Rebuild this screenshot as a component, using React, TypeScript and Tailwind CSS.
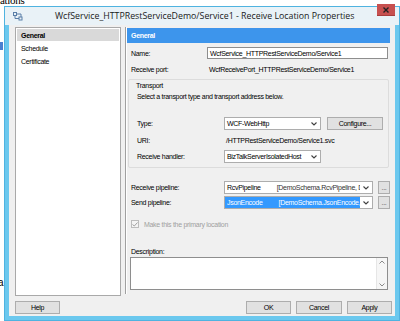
import React from 'react'

const font = { fontFamily: '"Liberation Sans", Arial, sans-serif' }

function Select({ w, value, extra, selected }: { w: string; value: string; extra?: string; selected?: boolean }) {
  return (
    <div className={`${w} shrink-0 h-[13px] bg-white border border-[#adadad] flex items-center`}>
      <div className={`flex-1 min-w-0 h-full flex items-center overflow-hidden whitespace-nowrap px-[2px] ${selected ? 'bg-[#3399ff] text-white' : 'text-black'}`}>
        <span>{value}</span>
        {extra && <span className={`ml-[16px] ${selected ? 'text-white' : 'text-[#333]'}`}>{extra}</span>}
      </div>
      <div className="w-[12px] shrink-0 h-full flex items-center justify-center">
        <svg width="6" height="4" viewBox="0 0 6 4"><path d="M0.5 0.5 L3 3 L5.5 0.5" stroke="#404040" strokeWidth="1.1" fill="none" /></svg>
      </div>
    </div>
  )
}

function Btn({ label, w }: { label: string; w: string }) {
  return (
    <div className={`${w} shrink-0 h-[13px] bg-[#e1e1e1] border border-[#adadad] flex items-center justify-center text-black`}>{label}</div>
  )
}

export default function App() {
  return (
    <div className="w-[400px] h-[321px] bg-white overflow-hidden flex text-[7px] tracking-[-0.3px] leading-none" style={font}>
      {/* background desktop fragments */}
      <div className="w-[4px] shrink-0 flex flex-col">
        <div className="h-[7px]" />
        <div className="mt-[35px] w-[3px] h-[8px] bg-[#4a7fd0]" />
        <div className="mt-[228px] text-[10px] text-black -ml-[2px]">a</div>
      </div>
      <div className="flex-1 min-w-0 flex flex-col">
        <div className="h-[6px] text-[11px] leading-none overflow-hidden -ml-[4px]">
          <div className="-mt-[5px] text-black" style={{ fontFamily: '"Liberation Serif", serif' }}>ations</div>
        </div>
        {/* window */}
        <div className="flex-1 min-h-0 min-w-0 bg-[#6bc8ee] border border-[#4fb3e0] flex flex-col px-[4px] pb-[4px]">
          <div className="h-[18px] shrink-0 -mx-[4px] bg-[#e9f2f7] flex items-center">
            <svg className="ml-[8px] shrink-0" width="10" height="9" viewBox="0 0 10 9">
              <rect x="0.5" y="0.5" width="3" height="3" fill="none" stroke="#5a7fa8" />
              <rect x="6" y="5" width="3" height="3" fill="none" stroke="#5a7fa8" />
              <path d="M2 4 L2 6.5 L6 6.5 M4 2 L8 2 L8 5" stroke="#5a7fa8" fill="none" />
            </svg>
            <div className="ml-[32px] text-[8.8px] tracking-normal text-[#1a1a1a] whitespace-nowrap" style={{ fontFamily: '"Open Sans", "Liberation Sans", sans-serif' }}>
              WcfService_HTTPRestServiceDemo/Service1 - Receive Location Properties
            </div>
            <div className="ml-auto mr-[4px] -mt-[3px] self-start shrink-0 w-[18px] h-[12px] bg-[#c7504f] border-b border-[#a83c3b] flex items-center justify-center">
              <svg width="6" height="6" viewBox="0 0 6 6"><path d="M0.5 0.5 L5.5 5.5 M5.5 0.5 L0.5 5.5" stroke="#222" strokeWidth="1.4" /></svg>
            </div>
          </div>
          <div className="flex-1 bg-[#f0f0f0] flex flex-col">
            <div className="flex pt-[2px]">
              {/* left list */}
              <div className="ml-[6px] w-[106px] shrink-0 h-[269px] bg-white border border-[#a9a9a9] flex flex-col pt-[1px]">
                <div className="mx-[1px] h-[12px] bg-[#d9d9d9] flex items-center pl-[4px] font-bold text-black">General</div>
                <div className="h-[14px] flex items-center pl-[5px] text-black">Schedule</div>
                <div className="h-[13px] flex items-center pl-[5px] text-black">Certificate</div>
              </div>
              {/* right panel */}
              <div className="ml-[4px] w-[266px] shrink-0 h-[267px] border-l border-[#a0a0a0] flex">
                <div className="w-[1px] bg-white" />
                <div className="flex-1 min-w-0 flex flex-col pt-[1px] pr-[1px] text-black">
                  <div className="h-[15px] bg-[#3d95ec] flex items-center pl-[4px] font-bold text-white">General</div>
                  <div className="mt-[4px] h-[12px] flex items-center">
                    <div className="w-[80px] shrink-0 pl-[4px]">Name:</div>
                    <div className="w-[181px] shrink-0 h-[12px] bg-white border border-[#8e8e8e] flex items-center px-[2px] whitespace-nowrap overflow-hidden">WcfService_HTTPRestServiceDemo/Service1</div>
                  </div>
                  <div className="mt-[4px] h-[12px] flex items-center whitespace-nowrap">
                    <div className="w-[82px] shrink-0 pl-[4px]">Receive port:</div>
                    <div>WcfReceivePort_HTTPRestServiceDemo/Service1</div>
                  </div>
                  {/* transport group */}
                  <div className="mt-[4px] mx-[1px] h-[89px] border border-[#dcdcdc] rounded-[2px] flex flex-col px-[8px]">
                    <div className="-ml-[1px] h-[10px] flex items-center">Transport</div>
                    <div className="mt-[1px] h-[10px] flex items-center whitespace-nowrap">Select a transport type and transport address below.</div>
                    <div className="mt-[16px] h-[13px] flex items-center">
                      <div className="w-[87px] shrink-0">Type:</div>
                      <Select w="w-[97px]" value="WCF-WebHttp" />
                      <div className="ml-[6px]"><Btn label="Configure..." w="w-[56px]" /></div>
                    </div>
                    <div className="mt-[4px] h-[12px] flex items-center whitespace-nowrap">
                      <div className="w-[89px] shrink-0">URI:</div>
                      <div>/HTTPRestServiceDemo/Service1.svc</div>
                    </div>
                    <div className="mt-[4px] h-[13px] flex items-center">
                      <div className="w-[87px] shrink-0">Receive handler:</div>
                      <Select w="w-[97px]" value="BizTalkServerIsolatedHost" />
                    </div>
                  </div>
                  <div className="mt-[13px] h-[13px] flex items-center">
                    <div className="w-[97px] shrink-0 pl-[4px]">Receive pipeline:</div>
                    <Select w="w-[149px]" value="RcvPipeline" extra="[DemoSchema.RcvPipeline, D" />
                    <div className="ml-[5px] shrink-0 w-[12px] h-[13px] bg-[#e1e1e1] border border-[#adadad] flex items-center justify-center text-[#555]">...</div>
                  </div>
                  <div className="mt-[2px] h-[13px] flex items-center">
                    <div className="w-[97px] shrink-0 pl-[4px]">Send pipeline:</div>
                    <Select w="w-[149px]" value="JsonEncode" extra="[DemoSchema.JsonEncode," selected />
                    <div className="ml-[5px] shrink-0 w-[12px] h-[13px] bg-[#e1e1e1] border border-[#adadad] flex items-center justify-center text-[#555]">...</div>
                  </div>
                  <div className="mt-[10px] h-[10px] flex items-center pl-[4px]">
                    <div className="w-[8px] h-[8px] border border-[#bcbcbc] bg-[#f4f4f4] flex items-center justify-center">
                      <svg width="6" height="5" viewBox="0 0 6 5"><path d="M0.5 2.5 L2.3 4 L5.5 0.5" stroke="#a0a0a0" strokeWidth="1" fill="none" /></svg>
                    </div>
                    <div className="ml-[5px] text-[#a0a0a0]">Make this the primary location</div>
                  </div>
                  <div className="mt-[17px] h-[10px] flex items-center pl-[4px]">Description:</div>
                  <div className="mt-[1px] ml-[3px] mr-[2px] h-[33px] bg-white border border-[#8e8e8e] flex justify-end">
                    <div className="w-[11px] h-full border-l border-[#e6e6e6] bg-[#f6f6f6] flex flex-col justify-between items-center py-[2px]">
                      <svg width="6" height="4" viewBox="0 0 6 4"><path d="M0.5 3.5 L3 1 L5.5 3.5" stroke="#8a8a8a" fill="none" /></svg>
                      <svg width="6" height="4" viewBox="0 0 6 4"><path d="M0.5 0.5 L3 3 L5.5 0.5" stroke="#8a8a8a" fill="none" /></svg>
                    </div>
                  </div>
                </div>
              </div>
            </div>
            {/* bottom buttons */}
            <div className="mt-[5px] flex items-center">
              <div className="ml-[6px]"><Btn label="Help" w="w-[45px]" /></div>
              <div className="ml-auto flex gap-[5px] mr-[3px]">
                <Btn label="OK" w="w-[45px]" />
                <Btn label="Cancel" w="w-[46px]" />
                <Btn label="Apply" w="w-[45px]" />
              </div>
            </div>
          </div>
        </div>
      </div>
    </div>
  )
}
